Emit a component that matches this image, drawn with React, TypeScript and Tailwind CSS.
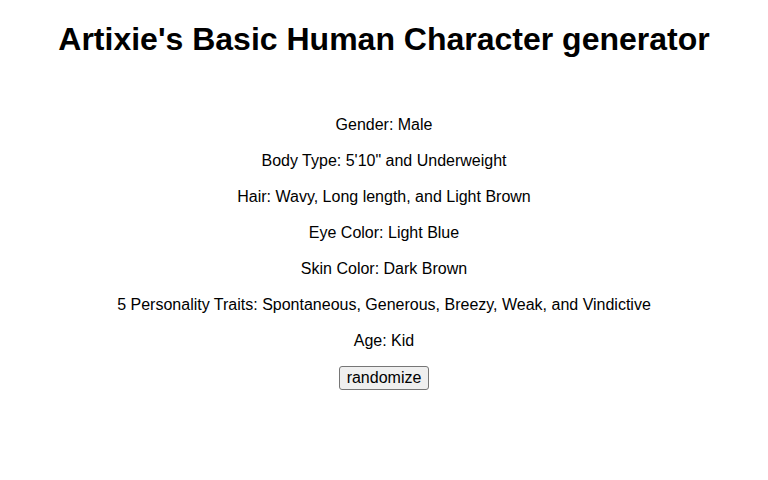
export default function App() {
  const traits = [
    'Gender: Male',
    'Body Type: 5\'10" and Underweight',
    'Hair: Wavy, Long length, and Light Brown',
    'Eye Color: Light Blue',
    'Skin Color: Dark Brown',
    '5 Personality Traits: Spontaneous, Generous, Breezy, Weak, and Vindictive',
    'Age: Kid',
  ];

  return (
    <div className="min-h-[480px] bg-white text-black font-['Liberation_Sans',Arial,sans-serif]">
      <h1 className="pt-[21px] text-center text-[32px] leading-[37px] font-bold">
        Artixie's Basic Human Character generator
      </h1>

      <div className="mt-[57px] flex flex-col items-center gap-[16px] text-[16px]">
        {traits.map(t => (
          <p key={t} className="leading-[20px] h-[20px]">{t}</p>
        ))}
        <button className="-mt-px h-[24px] px-[7px] bg-[#efefef] border border-[#767676] rounded-[3px] text-[16px] leading-[20px]">
          randomize
        </button>
      </div>
    </div>
  );
}
